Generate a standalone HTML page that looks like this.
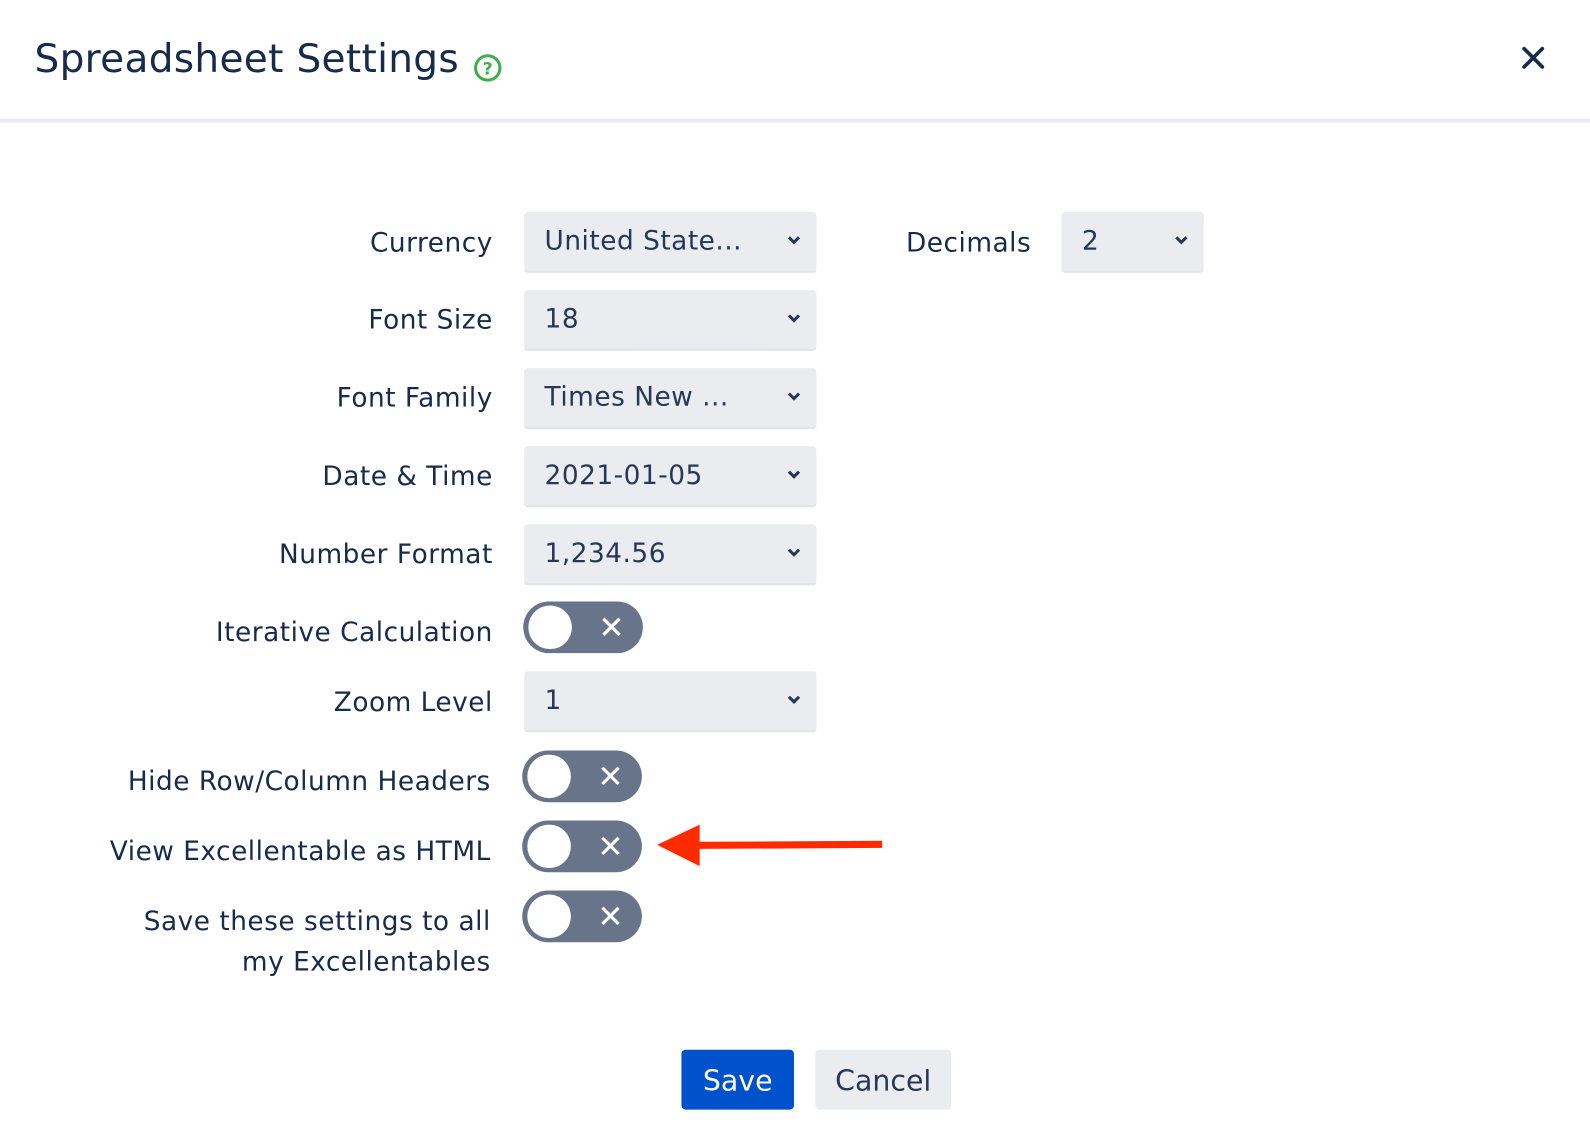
<!DOCTYPE html>
<html><head><meta charset="utf-8"><style>
html,body{margin:0;padding:0;background:#fff;width:1590px;height:1140px;overflow:hidden}
#w{position:absolute;left:0;top:0;width:1568px;height:1124px;transform:scale(1.01403,1.01423);transform-origin:0 0;font-family:"DejaVu Sans","Liberation Sans",sans-serif;color:#172b4d}
.a{position:absolute}
.lbl{position:absolute;right:1082px;font-size:26px;letter-spacing:0.5px;text-align:right;white-space:nowrap;line-height:40px}
.sel{position:absolute;left:517px;width:288px;height:58px;background:#ebecf0;border-radius:3px;box-shadow:0 2px 0 #e2e4e9;font-size:26px;letter-spacing:0.5px;line-height:58px;box-sizing:border-box;padding-left:20px;color:#253858}
.chev{position:absolute;right:14px;top:22px;width:16px;height:12px}
.tg{position:absolute;width:118px;height:51px;border-radius:26px;background:#67748a}
.tg .k{position:absolute;left:5px;top:4px;width:43px;height:43px;border-radius:50%;background:#fff}
.tg svg{position:absolute;left:76px;top:14px}
</style></head><body><div id="w">
<div class="a" style="left:34px;top:34px;font-size:38.5px;line-height:50px;letter-spacing:0.3px">Spreadsheet Settings</div>
<svg class="a" style="left:466px;top:52px" width="30" height="30" viewBox="0 0 30 30"><circle cx="15" cy="15" r="12" fill="none" stroke="#3fae49" stroke-width="3"/><text x="15" y="21.5" text-anchor="middle" font-family="DejaVu Sans" font-weight="bold" font-size="17" fill="#3fae49">?</text></svg>
<svg class="a" style="left:1500px;top:45px" width="24" height="24" viewBox="0 0 24 24"><path d="M3 3L21 21M21 3L3 21" stroke="#172b4d" stroke-width="3.6" stroke-linecap="round"/></svg>
<div class="a" style="left:0;top:117px;width:1568px;height:4px;background:#ebecf0"></div>

<div class="lbl" style="top:220px">Currency</div>
<div class="sel" style="top:209px">United State...<svg class="chev" viewBox="0 0 16 12"><path d="M3 3L8 8L13 3" fill="none" stroke="#253858" stroke-width="3"/></svg></div>
<div class="lbl" style="top:220px;right:551px">Decimals</div>
<div class="sel" style="top:209px;left:1047px;width:140px">2<svg class="chev" viewBox="0 0 16 12"><path d="M3 3L8 8L13 3" fill="none" stroke="#253858" stroke-width="3"/></svg></div>

<div class="lbl" style="top:296px">Font Size</div>
<div class="sel" style="top:286px">18<svg class="chev" viewBox="0 0 16 12"><path d="M3 3L8 8L13 3" fill="none" stroke="#253858" stroke-width="3"/></svg></div>
<div class="lbl" style="top:373px">Font Family</div>
<div class="sel" style="top:363px">Times New ...<svg class="chev" viewBox="0 0 16 12"><path d="M3 3L8 8L13 3" fill="none" stroke="#253858" stroke-width="3"/></svg></div>
<div class="lbl" style="top:450px">Date &amp; Time</div>
<div class="sel" style="top:440px">2021-01-05<svg class="chev" viewBox="0 0 16 12"><path d="M3 3L8 8L13 3" fill="none" stroke="#253858" stroke-width="3"/></svg></div>
<div class="lbl" style="top:527px">Number Format</div>
<div class="sel" style="top:517px">1,234.56<svg class="chev" viewBox="0 0 16 12"><path d="M3 3L8 8L13 3" fill="none" stroke="#253858" stroke-width="3"/></svg></div>
<div class="lbl" style="top:604px">Iterative Calculation</div>
<div class="tg" style="left:516px;top:593px"><div class="k"></div><svg width="22" height="22" viewBox="0 0 22 22"><path d="M3 3L19 19M19 3L3 19" stroke="#fff" stroke-width="3.2"/></svg></div>
<div class="lbl" style="top:673px">Zoom Level</div>
<div class="sel" style="top:662px">1<svg class="chev" viewBox="0 0 16 12"><path d="M3 3L8 8L13 3" fill="none" stroke="#253858" stroke-width="3"/></svg></div>
<div class="lbl" style="top:751px;right:1084px">Hide Row/Column Headers</div>
<div class="tg" style="left:515px;top:740px"><div class="k"></div><svg width="22" height="22" viewBox="0 0 22 22"><path d="M3 3L19 19M19 3L3 19" stroke="#fff" stroke-width="3.2"/></svg></div>
<div class="lbl" style="top:820px;right:1084px">View Excellentable as HTML</div>
<div class="tg" style="left:515px;top:809px"><div class="k"></div><svg width="22" height="22" viewBox="0 0 22 22"><path d="M3 3L19 19M19 3L3 19" stroke="#fff" stroke-width="3.2"/></svg></div>
<div class="lbl" style="top:889px;right:1084px">Save these settings to all<br>my Excellentables</div>
<div class="tg" style="left:515px;top:878px"><div class="k"></div><svg width="22" height="22" viewBox="0 0 22 22"><path d="M3 3L19 19M19 3L3 19" stroke="#fff" stroke-width="3.2"/></svg></div>

<svg class="a" style="left:640px;top:805px" width="240" height="55" viewBox="0 0 240 55"><path d="M8 28L50 8L50 25L230 24L230 31L50 32L50 49Z" fill="#ff2a00"/></svg>

<div class="a" style="left:672px;top:1035px;width:111px;height:59px;background:#0052cc;border-radius:4px;color:#fff;font-size:28px;line-height:62px;text-align:center">Save</div>
<div class="a" style="left:804px;top:1035px;width:134px;height:59px;background:#ebecf0;border-radius:4px;color:#253858;font-size:28px;line-height:62px;text-align:center">Cancel</div>
</div></body></html>
